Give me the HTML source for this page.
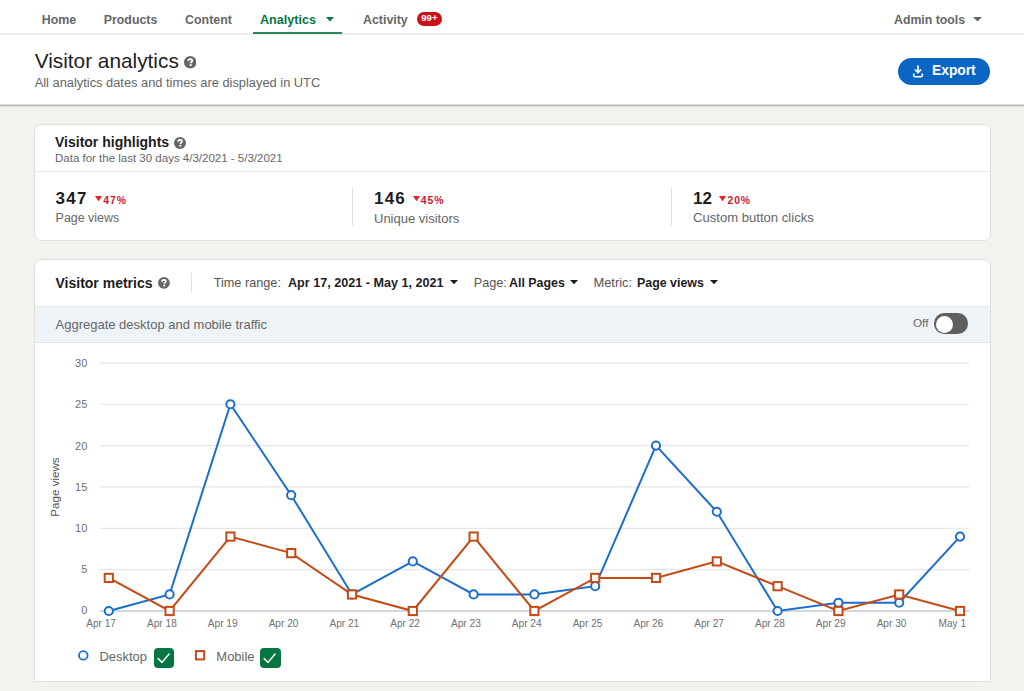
<!DOCTYPE html>
<html><head><meta charset="utf-8"><title>Visitor analytics</title>
<style>
html,body{margin:0;padding:0;}
body{width:1024px;height:691px;overflow:hidden;position:relative;background:#f3f2ef;font-family:"Liberation Sans",sans-serif;}
.a{position:absolute;}
.a svg{display:block}
.t{position:absolute;line-height:1;white-space:nowrap;}
.card{background:#fff;border:1px solid #e0dfdb;border-radius:7px;box-sizing:border-box;}
</style></head><body>
<div class="a" style="left:0;top:0;width:1024px;height:33px;background:#fff;border-bottom:2px solid #eeeeee"></div>
<div class="t" style="left:41.80px;top:14.00px;font-size:12.4px;font-weight:700;color:#666666;">Home</div>
<div class="t" style="left:103.70px;top:14.00px;font-size:12.4px;font-weight:700;color:#666666;">Products</div>
<div class="t" style="left:185.10px;top:14.00px;font-size:12.4px;font-weight:700;color:#666666;">Content</div>
<div class="t" style="left:260.00px;top:13.83px;font-size:12.6px;font-weight:700;color:#057642;">Analytics</div>
<svg class="a" style="left:326.2px;top:17.1px" width="8" height="4.6" viewBox="0 0 8 4.6"><path d="M0 0 L8 0 L4.0 4.6 Z" fill="#057642"/></svg>
<div class="a" style="left:253px;top:32px;width:89px;height:2px;background:#2a8758"></div>
<div class="t" style="left:363.00px;top:14.00px;font-size:12.4px;font-weight:700;color:#666666;">Activity</div>
<div class="a" style="left:416.7px;top:11.8px;width:25.4px;height:14.2px;border-radius:7.1px;background:#cc1016"></div>
<div class="t" style="left:429.40px;top:12.86px;font-size:9.5px;font-weight:700;color:#fff;transform:translateX(-50%);">99+</div>
<div class="t" style="left:894.00px;top:13.99px;font-size:12.3px;font-weight:700;color:#666666;">Admin tools</div>
<svg class="a" style="left:973px;top:17.3px" width="9" height="4.5" viewBox="0 0 9 4.5"><path d="M0 0 L9 0 L4.5 4.5 Z" fill="#666666"/></svg>
<div class="a" style="left:0;top:35px;width:1024px;height:69px;background:#fff"></div>
<div class="a" style="left:0;top:104px;width:1024px;height:1px;background:#dcdcd8"></div>
<div class="a" style="left:0;top:105px;width:1024px;height:1px;background:#b5b5b1"></div>
<div class="a" style="left:0;top:106px;width:1024px;height:2px;background:linear-gradient(#e2e1dd,#f1f0ed)"></div>
<div class="t" style="left:34.70px;top:51.39px;font-size:20.8px;font-weight:400;color:#1d1d1d;">Visitor analytics</div>
<svg class="a" style="left:183.5px;top:56px" width="12.5" height="12.5" viewBox="0 0 16 16"><circle cx="8" cy="8" r="8" fill="#666"/><path d="M5.5 6.3 C5.5 4.6 6.6 3.9 8.1 3.9 C9.6 3.9 10.6 4.7 10.6 6 C10.6 7.6 8.5 7.7 8.5 9.3" stroke="#fff" stroke-width="2.3" fill="none"/><rect x="7.3" y="10.4" width="2.4" height="2.4" fill="#fff"/></svg>
<div class="t" style="left:34.70px;top:76.62px;font-size:12.85px;font-weight:400;color:#666;">All analytics dates and times are displayed in UTC</div>
<div class="a" style="left:898px;top:57.7px;width:91.7px;height:27px;border-radius:14px;background:#0a66c2"></div>
<svg class="a" style="left:912px;top:64.5px" width="12" height="13" viewBox="0 0 12 13"><path d="M6 1.2 V7.4 M3.4 5 L6 7.6 L8.6 5" stroke="#fff" stroke-width="1.7" fill="none" stroke-linecap="round" stroke-linejoin="round"/><path d="M1.7 9 V10.2 Q1.7 11.8 3.3 11.8 H8.7 Q10.3 11.8 10.3 10.2 V9" stroke="#fff" stroke-width="1.6" fill="none" stroke-linecap="round"/></svg>
<div class="t" style="left:932.00px;top:64.12px;font-size:13.8px;font-weight:700;color:#fff;">Export</div>
<div class="a card" style="left:34px;top:124px;width:957px;height:117px"></div>
<div class="t" style="left:55.00px;top:135.15px;font-size:14px;font-weight:700;color:#1d1d1d;">Visitor highlights</div>
<svg class="a" style="left:173.7px;top:136.8px" width="12" height="12" viewBox="0 0 16 16"><circle cx="8" cy="8" r="8" fill="#666"/><path d="M5.5 6.3 C5.5 4.6 6.6 3.9 8.1 3.9 C9.6 3.9 10.6 4.7 10.6 6 C10.6 7.6 8.5 7.7 8.5 9.3" stroke="#fff" stroke-width="2.3" fill="none"/><rect x="7.3" y="10.4" width="2.4" height="2.4" fill="#fff"/></svg>
<div class="t" style="left:55.00px;top:153.27px;font-size:11.5px;font-weight:400;color:#666;">Data for the last 30 days 4/3/2021 - 5/3/2021</div>
<div class="a" style="left:35px;top:171px;width:955px;height:1px;background:#e8e8e8"></div>
<div class="t" style="left:55.60px;top:190.41px;font-size:17.0px;font-weight:700;color:#1d1d1d;letter-spacing:1.2px;">347</div>
<svg class="a" style="left:95.1px;top:195.8px" width="7" height="5.3" viewBox="0 0 7 5.3"><path d="M0 0 L7 0 L3.5 5.3 Z" fill="#e8202a"/></svg>
<div class="t" style="left:103.30px;top:195.60px;font-size:10.4px;font-weight:700;color:#cc1630;letter-spacing:0.9px;">47%</div>
<div class="t" style="left:55.60px;top:211.96px;font-size:12.45px;font-weight:400;color:#666;">Page views</div>
<div class="a" style="left:352px;top:186.6px;width:1px;height:39px;background:#e0e0e0"></div>
<div class="t" style="left:374.00px;top:190.41px;font-size:17.0px;font-weight:700;color:#1d1d1d;letter-spacing:1.2px;">146</div>
<svg class="a" style="left:412.5px;top:195.8px" width="7" height="5.3" viewBox="0 0 7 5.3"><path d="M0 0 L7 0 L3.5 5.3 Z" fill="#e8202a"/></svg>
<div class="t" style="left:420.80px;top:195.60px;font-size:10.4px;font-weight:700;color:#cc1630;letter-spacing:0.9px;">45%</div>
<div class="t" style="left:374.00px;top:211.50px;font-size:13.0px;font-weight:400;color:#666;">Unique visitors</div>
<div class="a" style="left:671px;top:186.6px;width:1px;height:39px;background:#e0e0e0"></div>
<div class="t" style="left:693.00px;top:190.41px;font-size:17.0px;font-weight:700;color:#1d1d1d;letter-spacing:0.1px;">12</div>
<svg class="a" style="left:718.9px;top:195.8px" width="7" height="5.3" viewBox="0 0 7 5.3"><path d="M0 0 L7 0 L3.5 5.3 Z" fill="#e8202a"/></svg>
<div class="t" style="left:727.50px;top:195.60px;font-size:10.4px;font-weight:700;color:#cc1630;letter-spacing:0.9px;">20%</div>
<div class="t" style="left:693.00px;top:211.41px;font-size:13.1px;font-weight:400;color:#666;">Custom button clicks</div>
<div class="a card" style="left:34px;top:259px;width:957px;height:423px;border-radius:7px 7px 0 0"></div>
<div class="t" style="left:55.50px;top:276.15px;font-size:14px;font-weight:700;color:#1d1d1d;">Visitor metrics</div>
<svg class="a" style="left:158.3px;top:277.2px" width="11.8" height="11.8" viewBox="0 0 16 16"><circle cx="8" cy="8" r="8" fill="#666"/><path d="M5.5 6.3 C5.5 4.6 6.6 3.9 8.1 3.9 C9.6 3.9 10.6 4.7 10.6 6 C10.6 7.6 8.5 7.7 8.5 9.3" stroke="#fff" stroke-width="2.3" fill="none"/><rect x="7.3" y="10.4" width="2.4" height="2.4" fill="#fff"/></svg>
<div class="a" style="left:191px;top:273px;width:1px;height:20px;background:#e0e0e0"></div>
<div class="t" style="left:213.70px;top:276.95px;font-size:12.7px;font-weight:400;color:#555;">Time range:</div>
<div class="t" style="left:288.00px;top:277.03px;font-size:12.6px;font-weight:700;color:#1d1d1d;">Apr 17, 2021 - May 1, 2021</div>
<svg class="a" style="left:450.2px;top:280.2px" width="8" height="4.3" viewBox="0 0 8 4.3"><path d="M0 0 L8 0 L4.0 4.3 Z" fill="#1d1d1d"/></svg>
<div class="t" style="left:473.70px;top:276.95px;font-size:12.7px;font-weight:400;color:#555;">Page:</div>
<div class="t" style="left:509.00px;top:277.20px;font-size:12.4px;font-weight:700;color:#1d1d1d;">All Pages</div>
<svg class="a" style="left:570.2px;top:280.2px" width="8" height="4.3" viewBox="0 0 8 4.3"><path d="M0 0 L8 0 L4.0 4.3 Z" fill="#1d1d1d"/></svg>
<div class="t" style="left:593.40px;top:276.78px;font-size:12.9px;font-weight:400;color:#555;">Metric:</div>
<div class="t" style="left:637.00px;top:277.20px;font-size:12.4px;font-weight:700;color:#1d1d1d;">Page views</div>
<svg class="a" style="left:710.4px;top:280.2px" width="8" height="4.3" viewBox="0 0 8 4.3"><path d="M0 0 L8 0 L4.0 4.3 Z" fill="#1d1d1d"/></svg>
<div class="a" style="left:35px;top:306px;width:955px;height:35px;background:#eef3f8;border-top:1px solid #e5e8eb;border-bottom:1px solid #e0e4e8"></div>
<div class="t" style="left:55.50px;top:317.50px;font-size:13px;font-weight:400;color:#666;">Aggregate desktop and mobile traffic</div>
<div class="t" style="left:913.00px;top:317.30px;font-size:11.7px;font-weight:400;color:#666;">Off</div>
<div class="a" style="left:934px;top:313.2px;width:33.8px;height:20.5px;border-radius:10.25px;background:#5e5e5e"></div>
<div class="a" style="left:935.8px;top:315.6px;width:17.6px;height:17.6px;border-radius:50%;background:#fff"></div>
<svg class="a" style="left:0;top:0" width="1024" height="691" viewBox="0 0 1024 691"><line x1="100" x2="969.3" y1="569.65" y2="569.65" stroke="#e6e6e6" stroke-width="1.2"/><line x1="100" x2="969.3" y1="528.30" y2="528.30" stroke="#e6e6e6" stroke-width="1.2"/><line x1="100" x2="969.3" y1="486.95" y2="486.95" stroke="#e6e6e6" stroke-width="1.2"/><line x1="100" x2="969.3" y1="445.60" y2="445.60" stroke="#e6e6e6" stroke-width="1.2"/><line x1="100" x2="969.3" y1="404.25" y2="404.25" stroke="#e6e6e6" stroke-width="1.2"/><line x1="100" x2="969.3" y1="362.90" y2="362.90" stroke="#e6e6e6" stroke-width="1.2"/><line x1="100" x2="969.3" y1="611.0" y2="611.0" stroke="#c5cad6" stroke-width="1.6"/><polyline points="108.80,611.00 169.60,594.46 230.40,404.25 291.20,495.22 352.00,594.46 412.80,561.38 473.60,594.46 534.40,594.46 595.20,586.19 656.00,445.60 716.80,511.76 777.60,611.00 838.40,602.73 899.20,602.73 960.00,536.57" fill="none" stroke="#1b6ecb" stroke-width="2"/><polyline points="108.80,577.92 169.60,611.00 230.40,536.57 291.20,553.11 352.00,594.46 412.80,611.00 473.60,536.57 534.40,611.00 595.20,577.92 656.00,577.92 716.80,561.38 777.60,586.19 838.40,611.00 899.20,594.46 960.00,611.00" fill="none" stroke="#c44b16" stroke-width="2"/><circle cx="108.80" cy="611.00" r="4.1" fill="#fff" stroke="#1b6ecb" stroke-width="2"/><circle cx="169.60" cy="594.46" r="4.1" fill="#fff" stroke="#1b6ecb" stroke-width="2"/><circle cx="230.40" cy="404.25" r="4.1" fill="#fff" stroke="#1b6ecb" stroke-width="2"/><circle cx="291.20" cy="495.22" r="4.1" fill="#fff" stroke="#1b6ecb" stroke-width="2"/><circle cx="352.00" cy="594.46" r="4.1" fill="#fff" stroke="#1b6ecb" stroke-width="2"/><circle cx="412.80" cy="561.38" r="4.1" fill="#fff" stroke="#1b6ecb" stroke-width="2"/><circle cx="473.60" cy="594.46" r="4.1" fill="#fff" stroke="#1b6ecb" stroke-width="2"/><circle cx="534.40" cy="594.46" r="4.1" fill="#fff" stroke="#1b6ecb" stroke-width="2"/><circle cx="595.20" cy="586.19" r="4.1" fill="#fff" stroke="#1b6ecb" stroke-width="2"/><circle cx="656.00" cy="445.60" r="4.1" fill="#fff" stroke="#1b6ecb" stroke-width="2"/><circle cx="716.80" cy="511.76" r="4.1" fill="#fff" stroke="#1b6ecb" stroke-width="2"/><circle cx="777.60" cy="611.00" r="4.1" fill="#fff" stroke="#1b6ecb" stroke-width="2"/><circle cx="838.40" cy="602.73" r="4.1" fill="#fff" stroke="#1b6ecb" stroke-width="2"/><circle cx="899.20" cy="602.73" r="4.1" fill="#fff" stroke="#1b6ecb" stroke-width="2"/><circle cx="960.00" cy="536.57" r="4.1" fill="#fff" stroke="#1b6ecb" stroke-width="2"/><rect x="104.70" y="573.82" width="8.2" height="8.2" fill="#fff" stroke="#c44b16" stroke-width="2"/><rect x="165.50" y="606.90" width="8.2" height="8.2" fill="#fff" stroke="#c44b16" stroke-width="2"/><rect x="226.30" y="532.47" width="8.2" height="8.2" fill="#fff" stroke="#c44b16" stroke-width="2"/><rect x="287.10" y="549.01" width="8.2" height="8.2" fill="#fff" stroke="#c44b16" stroke-width="2"/><rect x="347.90" y="590.36" width="8.2" height="8.2" fill="#fff" stroke="#c44b16" stroke-width="2"/><rect x="408.70" y="606.90" width="8.2" height="8.2" fill="#fff" stroke="#c44b16" stroke-width="2"/><rect x="469.50" y="532.47" width="8.2" height="8.2" fill="#fff" stroke="#c44b16" stroke-width="2"/><rect x="530.30" y="606.90" width="8.2" height="8.2" fill="#fff" stroke="#c44b16" stroke-width="2"/><rect x="591.10" y="573.82" width="8.2" height="8.2" fill="#fff" stroke="#c44b16" stroke-width="2"/><rect x="651.90" y="573.82" width="8.2" height="8.2" fill="#fff" stroke="#c44b16" stroke-width="2"/><rect x="712.70" y="557.28" width="8.2" height="8.2" fill="#fff" stroke="#c44b16" stroke-width="2"/><rect x="773.50" y="582.09" width="8.2" height="8.2" fill="#fff" stroke="#c44b16" stroke-width="2"/><rect x="834.30" y="606.90" width="8.2" height="8.2" fill="#fff" stroke="#c44b16" stroke-width="2"/><rect x="895.10" y="590.36" width="8.2" height="8.2" fill="#fff" stroke="#c44b16" stroke-width="2"/><rect x="955.90" y="606.90" width="8.2" height="8.2" fill="#fff" stroke="#c44b16" stroke-width="2"/></svg>
<div class="t" style="right:936.70px;top:605.49px;font-size:11px;font-weight:400;color:#707070;">0</div>
<div class="t" style="right:936.70px;top:564.19px;font-size:11px;font-weight:400;color:#707070;">5</div>
<div class="t" style="right:936.70px;top:522.59px;font-size:11px;font-weight:400;color:#707070;">10</div>
<div class="t" style="right:936.70px;top:482.19px;font-size:11px;font-weight:400;color:#707070;">15</div>
<div class="t" style="right:936.70px;top:440.59px;font-size:11px;font-weight:400;color:#707070;">20</div>
<div class="t" style="right:936.70px;top:399.49px;font-size:11px;font-weight:400;color:#707070;">25</div>
<div class="t" style="right:936.70px;top:358.49px;font-size:11px;font-weight:400;color:#707070;">30</div>
<div class="t" style="left:101.10px;top:618.85px;font-size:10.1px;font-weight:400;color:#707070;transform:translateX(-50%);">Apr 17</div>
<div class="t" style="left:161.90px;top:618.85px;font-size:10.1px;font-weight:400;color:#707070;transform:translateX(-50%);">Apr 18</div>
<div class="t" style="left:222.70px;top:618.85px;font-size:10.1px;font-weight:400;color:#707070;transform:translateX(-50%);">Apr 19</div>
<div class="t" style="left:283.50px;top:618.85px;font-size:10.1px;font-weight:400;color:#707070;transform:translateX(-50%);">Apr 20</div>
<div class="t" style="left:344.30px;top:618.85px;font-size:10.1px;font-weight:400;color:#707070;transform:translateX(-50%);">Apr 21</div>
<div class="t" style="left:405.10px;top:618.85px;font-size:10.1px;font-weight:400;color:#707070;transform:translateX(-50%);">Apr 22</div>
<div class="t" style="left:465.90px;top:618.85px;font-size:10.1px;font-weight:400;color:#707070;transform:translateX(-50%);">Apr 23</div>
<div class="t" style="left:526.70px;top:618.85px;font-size:10.1px;font-weight:400;color:#707070;transform:translateX(-50%);">Apr 24</div>
<div class="t" style="left:587.50px;top:618.85px;font-size:10.1px;font-weight:400;color:#707070;transform:translateX(-50%);">Apr 25</div>
<div class="t" style="left:648.30px;top:618.85px;font-size:10.1px;font-weight:400;color:#707070;transform:translateX(-50%);">Apr 26</div>
<div class="t" style="left:709.10px;top:618.85px;font-size:10.1px;font-weight:400;color:#707070;transform:translateX(-50%);">Apr 27</div>
<div class="t" style="left:769.90px;top:618.85px;font-size:10.1px;font-weight:400;color:#707070;transform:translateX(-50%);">Apr 28</div>
<div class="t" style="left:830.70px;top:618.85px;font-size:10.1px;font-weight:400;color:#707070;transform:translateX(-50%);">Apr 29</div>
<div class="t" style="left:891.50px;top:618.85px;font-size:10.1px;font-weight:400;color:#707070;transform:translateX(-50%);">Apr 30</div>
<div class="t" style="left:952.30px;top:618.85px;font-size:10.1px;font-weight:400;color:#707070;transform:translateX(-50%);">May 1</div>
<div class="t" style="left:55px;top:486.75px;font-size:11.6px;color:#555;transform:translate(-50%,-50%) rotate(-90deg);">Page views</div>
<svg class="a" style="left:70px;top:645px" width="20" height="20" viewBox="70 645 20 20"><circle cx="83.3" cy="655.4" r="4.3" fill="none" stroke="#1b6ecb" stroke-width="1.8"/></svg>
<div class="t" style="left:99.40px;top:650.00px;font-size:13px;font-weight:400;color:#666;">Desktop</div>
<div class="a" style="left:153.7px;top:647.6px;width:20.4px;height:20.4px;border-radius:4px;background:#057642"><svg width="20.4" height="20.4" viewBox="0 0 20 20"><path d="M4.1 10.4 L7.9 14.1 L14.8 6" stroke="#fff" stroke-width="1.5" fill="none" stroke-linecap="round" stroke-linejoin="round"/></svg></div>
<svg class="a" style="left:190px;top:645px" width="20" height="20" viewBox="190 645 20 20"><rect x="195.9" y="651.1" width="8.3" height="8.3" fill="none" stroke="#c44b16" stroke-width="2"/></svg>
<div class="t" style="left:216.30px;top:650.00px;font-size:13px;font-weight:400;color:#666;">Mobile</div>
<div class="a" style="left:260.4px;top:647.6px;width:20.4px;height:20.4px;border-radius:4px;background:#057642"><svg width="20.4" height="20.4" viewBox="0 0 20 20"><path d="M4.1 10.4 L7.9 14.1 L14.8 6" stroke="#fff" stroke-width="1.5" fill="none" stroke-linecap="round" stroke-linejoin="round"/></svg></div>
</body></html>
